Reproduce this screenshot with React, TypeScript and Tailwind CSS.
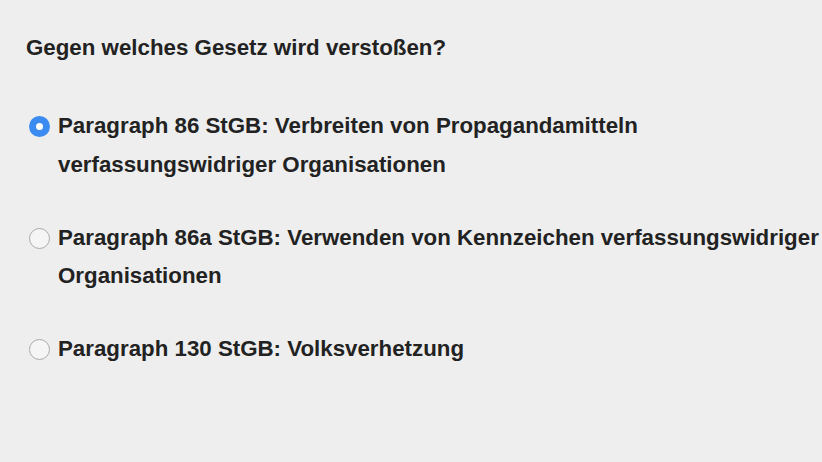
const options = [
  "Paragraph 86 StGB: Verbreiten von Propagandamitteln verfassungswidriger Organisationen",
  "Paragraph 86a StGB: Verwenden von Kennzeichen verfassungswidriger Organisationen",
  "Paragraph 130 StGB: Volksverhetzung",
];

export default function App() {
  return (
    <div className="w-[822px] h-[462px] bg-[#eeeeee] text-[#222222] font-['Liberation_Sans',Arial,sans-serif] font-bold pl-[26px] pt-[35px] overflow-hidden">
      <h1 className="text-[22.3px] leading-[26px] font-bold">Gegen welches Gesetz wird verstoßen?</h1>
      <div className="mt-[46px] flex flex-col gap-[34.5px]">
        {options.map((text, i) => (
          <label key={i} className="flex items-start gap-[8px] text-[22.3px] leading-[38.5px]">
            <span
              className={
                i === 0
                  ? "mt-[9px] ml-[3px] w-[21px] h-[21px] shrink-0 rounded-full bg-[#3b8bf0] flex items-center justify-center"
                  : "mt-[9px] ml-[3px] w-[21px] h-[21px] shrink-0 rounded-full border border-[#aaaaaa] bg-[#f5f5f5]"
              }
            >
              {i === 0 && <span className="w-[7px] h-[7px] rounded-full bg-white" />}
            </span>
            <span className="max-w-[764px]">{text}</span>
          </label>
        ))}
      </div>
    </div>
  );
}
